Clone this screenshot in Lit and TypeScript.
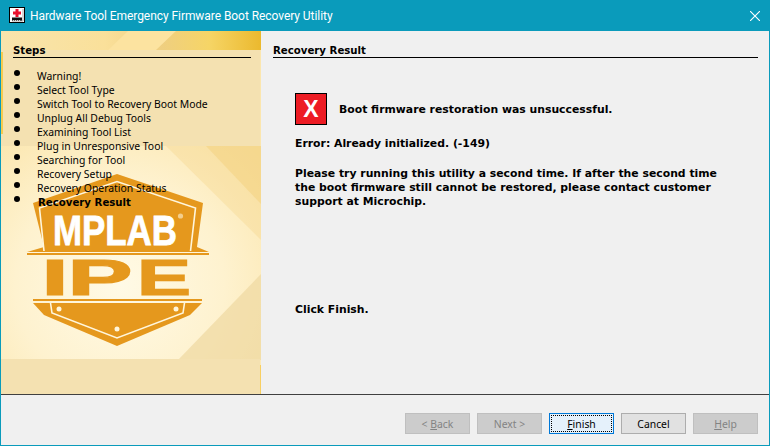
import { LitElement, html, css, svg } from "lit";
import { customElement } from "lit/decorators.js";

const STEPS = [
  "Warning!",
  "Select Tool Type",
  "Switch Tool to Recovery Boot Mode",
  "Unplug All Debug Tools",
  "Examining Tool List",
  "Plug in Unresponsive Tool",
  "Searching for Tool",
  "Recovery Setup",
  "Recovery Operation Status",
  "Recovery Result",
];

const art = svg`
  <defs>
    <radialGradient id="glow" gradientUnits="userSpaceOnUse" cx="120" cy="285" r="190">
      <stop offset="0" stop-color="#FFFAE6"/>
      <stop offset="0.55" stop-color="#FEF2CF"/>
      <stop offset="1" stop-color="#FBE6AE"/>
    </radialGradient>
    <linearGradient id="band" gradientUnits="userSpaceOnUse" x1="1" y1="0" x2="261" y2="0">
      <stop offset="0" stop-color="#F8E4AC"/>
      <stop offset="0.4" stop-color="#FAE09A"/>
      <stop offset="0.62" stop-color="#EFCF80"/>
      <stop offset="0.8" stop-color="#F6D566"/>
      <stop offset="1" stop-color="#EBB92E"/>
    </linearGradient>
  </defs>
  <rect x="1" y="31" width="260" height="363" fill="url(#glow)"/>
  <polygon points="166,146 261,146 261,240" fill="#F4D68E" opacity="0.4"/>
  <polygon points="206,146 261,146 261,204" fill="#F2CE78" opacity="0.45"/>
  <polygon points="178,360 261,274 261,360" fill="#EFD9A3" opacity="0.75"/>
  <rect x="1" y="31" width="260" height="19" fill="url(#band)"/>
  <polygon points="108,50 128,31 176,31 156,50" fill="#FCE3A0"/>
  <rect x="1" y="50" width="259" height="96" fill="#F4E1B1"/>
  <rect x="1" y="359" width="259" height="35" fill="#F4E1B1"/>
  <rect x="1" y="52" width="2" height="82" fill="#F6CC4E"/>
  <rect x="260" y="365" width="1" height="29" fill="#F8CF62"/>

  <polygon points="117,174 203,203 197,247 209,252 27,252 44,247 33,203" fill="#E5981D"/>
  <polyline points="44,251 39.5,208 117,181.5 195.5,208 190.5,251" fill="none" stroke="#FFF6DC" stroke-width="1.6"/>
  <rect x="27" y="252" width="182" height="1" fill="#FFF6DC"/>
  <rect x="27" y="253" width="182" height="2" fill="#E5981D"/>
  <text class="mp" x="53" y="244.6" textLength="124" lengthAdjust="spacingAndGlyphs">MPLAB</text>
  <circle cx="180.5" cy="216" r="2.6" fill="#F3CE8C"/>

  <text class="ipe" x="41.5" y="295.4" textLength="27" lengthAdjust="spacingAndGlyphs">I</text>
  <text class="ipe" x="67.5" y="295.4" textLength="65" lengthAdjust="spacingAndGlyphs">P</text>
  <text class="ipe" x="137" y="295.4" textLength="54" lengthAdjust="spacingAndGlyphs">E</text>

  <rect x="33" y="299" width="169" height="2" fill="#E5981D"/>
  <polygon points="33,303 202,303 190,315 117,346 44,315" fill="#E5981D"/>
  <polyline points="50.5,303 52,313 117,338 183,313 184.5,303" fill="none" stroke="#FFF6DC" stroke-width="1.6"/>
  <circle cx="59" cy="309" r="2.5" fill="#FFF6DC"/>
  <circle cx="176" cy="309" r="2.5" fill="#FFF6DC"/>
  <circle cx="117" cy="329" r="2.5" fill="#FFF6DC"/>
`;

@customElement("app-root")
export class AppRoot extends LitElement {
  static styles = css`
    :host {
      display: block;
      width: 770px;
      height: 446px;
      font-family: "Noto Sans", "Liberation Sans", sans-serif;
      font-size: 10.4px;
      color: #000;
    }
    .window {
      box-sizing: border-box;
      width: 770px;
      height: 446px;
      display: flex;
      flex-direction: column;
      background: #0a9bbb;
      padding: 0 1px 1px;
    }
    .titlebar {
      height: 31px;
      flex: none;
      display: flex;
      align-items: center;
      padding-left: 8px;
      color: #fff;
      font-family: Roboto, sans-serif;
      font-size: 12px;
      letter-spacing: -0.06px;
    }
    .titlebar .app {
      flex: none;
      display: block;
      margin-top: -1px;
    }
    .titlebar .name {
      flex: 1;
      margin-left: 5px;
    }
    .titlebar .close {
      flex: none;
      display: block;
      margin-right: 9px;
    }
    .client {
      flex: 1;
      display: flex;
      flex-direction: column;
      background: #f0f0f0;
    }
    .main {
      height: 363px;
      flex: none;
      display: flex;
      border-bottom: 1px solid #404040;
    }
    .side {
      position: relative;
      width: 260px;
      flex: none;
      box-sizing: border-box;
      padding: 13px 10px 0 12px;
    }
    .side .bg {
      position: absolute;
      left: 0;
      top: 0;
      width: 260px;
      height: 363px;
    }
    .bg .mp {
      font: 700 43px "Liberation Sans", sans-serif;
      fill: #fff;
      stroke: #fff;
      stroke-width: 0.8px;
    }
    .bg .ipe {
      font: 700 50px "Liberation Sans", sans-serif;
      fill: #e5981d;
      stroke: #e5981d;
      stroke-width: 1.2px;
    }
    .head {
      position: relative;
      font-family: "DejaVu Sans", sans-serif;
      font-size: 10.2px;
      font-weight: 700;
      line-height: 14px;
      height: 13px;
      border-bottom: 1px solid #000;
    }
    .steps {
      position: relative;
      list-style: none;
      margin: 11px 0 0;
      padding: 0;
    }
    .steps li {
      display: flex;
      height: 14px;
      line-height: 14px;
      white-space: nowrap;
    }
    .steps .dot {
      flex: none;
      width: 6px;
      height: 6px;
      border-radius: 50%;
      background: #000;
      margin: 1px 17px 0 1px;
    }
    .steps .now {
      font-family: "DejaVu Sans", sans-serif;
      font-size: 10.2px;
      font-weight: 700;
      line-height: 16px;
      margin-left: 1px;
    }
    .pane {
      flex: 1;
      padding: 13px 11px 0 12px;
    }
    .msg {
      margin: 35px 0 0 22px;
      font-family: "DejaVu Sans", sans-serif;
      font-size: 10.85px;
      font-weight: 700;
      line-height: 14px;
    }
    .msg p {
      margin: 0;
      white-space: nowrap;
    }
    .status {
      display: flex;
      align-items: center;
      gap: 12px;
    }
    .status p {
      padding-top: 2px;
    }
    .fail {
      flex: none;
      box-sizing: border-box;
      width: 32px;
      height: 32px;
      border: 1px solid #000;
      background: #ed1c24;
      color: #fff;
      font: 700 23px/30px "Liberation Sans", sans-serif;
      text-align: center;
    }
    .msg .error {
      margin-top: 12px;
    }
    .msg .advice {
      margin-top: 16px;
    }
    .msg .finish {
      margin-top: 94px;
    }
    .footer {
      flex: 1;
      display: flex;
      justify-content: flex-end;
      align-items: flex-start;
      gap: 7px;
      padding: 18px 11px 0 0;
    }
    .btn {
      box-sizing: border-box;
      width: 65px;
      height: 21px;
      padding: 0;
      font: inherit;
      line-height: 18px;
      text-align: center;
      border: 1px solid #adadad;
      background: #e1e1e1;
      color: #000;
    }
    .btn:disabled {
      background: #cccccc;
      border-color: #bfbfbf;
      color: #838383;
    }
    .btn.def {
      background: #e5f1fb;
      border-color: #0078d7;
      outline: 1px dotted #000;
      outline-offset: -3px;
    }
  `;

  render() {
    return html`
      <div class="window">
        <div class="titlebar">
          <svg class="app" width="16" height="16" viewBox="0 0 16 16">
            <rect x="0.5" y="0.5" width="15" height="15" fill="#fff" stroke="#000"/>
            <path d="M6.500 2h3v2.500H12v3H9.500V10h-3V7.500H4v-3h2.500z" fill="#e8112d"/>
            <path d="M3 10.500h10v3.500H3z" fill="#111"/>
            <path d="M4 13h1v1H4zM6 13h1v1H6zM8 13h1v1H8zM10 13h1v1h-1z" fill="#fff"/>
            <path d="M14 2v12H3" fill="none" stroke="#aaa"/>
          </svg>
          <span class="name">Hardware Tool Emergency Firmware Boot Recovery Utility</span>
          <svg class="close" width="10" height="10" viewBox="0 0 10 10">
            <path d="M0 0L10 10M10 0L0 10" stroke="#fff" stroke-width="1.1" fill="none"/>
          </svg>
        </div>
        <div class="client">
          <div class="main">
            <div class="side">
              <svg class="bg" viewBox="1 31 260 363">${art}</svg>
              <div class="head">Steps</div>
              <ul class="steps">
                ${STEPS.map(
                  (s, i) => html`<li>
                    <span class="dot"></span>
                    <span class=${i === STEPS.length - 1 ? "now" : ""}>${s}</span>
                  </li>`
                )}
              </ul>
            </div>
            <div class="pane">
              <div class="head">Recovery Result</div>
              <div class="msg">
                <div class="status">
                  <div class="fail">X</div>
                  <p>Boot firmware restoration was unsuccessful.</p>
                </div>
                <p class="error">Error: Already initialized. (-149)</p>
                <p class="advice">
                  Please try running this utility a second time. If after the second time<br />
                  the boot firmware still cannot be restored, please contact customer<br />
                  support at Microchip.
                </p>
                <p class="finish">Click Finish.</p>
              </div>
            </div>
          </div>
          <div class="footer">
            <button class="btn" disabled>&lt; <u>B</u>ack</button>
            <button class="btn" disabled>Next &gt;</button>
            <button class="btn def"><u>F</u>inish</button>
            <button class="btn">Cancel</button>
            <button class="btn" disabled><u>H</u>elp</button>
          </div>
        </div>
      </div>
    `;
  }
}
